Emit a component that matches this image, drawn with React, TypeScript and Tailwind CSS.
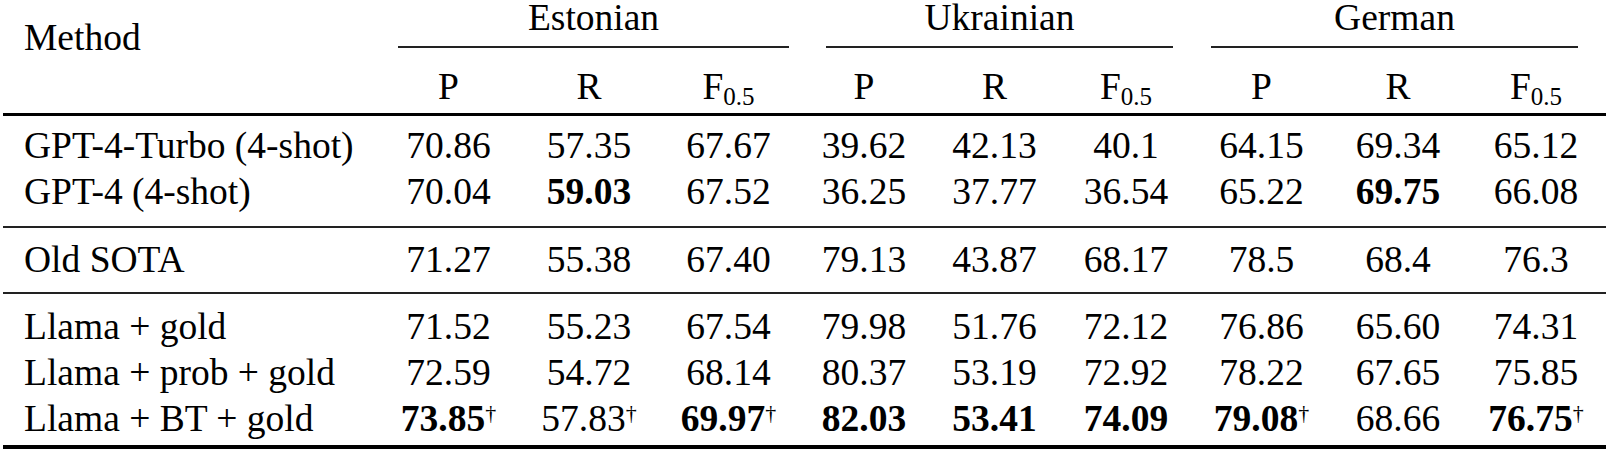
import React from "react";

// "*" prefix = bold, "^" suffix = dagger
const groupA = [
  ["GPT-4-Turbo (4-shot)", "70.86", "57.35", "67.67", "39.62", "42.13", "40.1", "64.15", "69.34", "65.12"],
  ["GPT-4 (4-shot)", "70.04", "*59.03", "67.52", "36.25", "37.77", "36.54", "65.22", "*69.75", "66.08"],
];
const groupB = [["Old SOTA", "71.27", "55.38", "67.40", "79.13", "43.87", "68.17", "78.5", "68.4", "76.3"]];
const groupC = [
  ["Llama + gold", "71.52", "55.23", "67.54", "79.98", "51.76", "72.12", "76.86", "65.60", "74.31"],
  ["Llama + prob + gold", "72.59", "54.72", "68.14", "80.37", "53.19", "72.92", "78.22", "67.65", "75.85"],
  ["Llama + BT + gold", "*73.85^", "57.83^", "*69.97^", "*82.03", "*53.41", "*74.09", "*79.08^", "68.66", "*76.75^"],
];

const Cell: React.FC<{ raw: string }> = ({ raw }) => {
  const bold = raw.startsWith("*");
  const dagger = raw.endsWith("^");
  const value = raw.replace("*", "").replace("^", "");
  return (
    <div className="h-[46px] leading-[46px] text-center whitespace-nowrap">
      <span className={bold ? "font-bold" : ""}>{value}</span>
      {dagger && <sup className="text-[22px] font-normal">†</sup>}
    </div>
  );
};

const Rows: React.FC<{ rows: string[][] }> = ({ rows }) => (
  <>
    {rows.map((row) => (
      <React.Fragment key={row[0]}>
        <div className="h-[46px] leading-[46px] pl-[21px] whitespace-nowrap">{row[0]}</div>
        {row.slice(1).map((v, i) => (
          <Cell key={i} raw={v} />
        ))}
      </React.Fragment>
    ))}
  </>
);

const Sub: React.FC<{ label: string }> = ({ label }) => (
  <div className="h-[65px] pt-[17px] leading-[44px] text-center">
    {label === "F" ? (
      <>
        F<sub className="text-[25px]">0.5</sub>
      </>
    ) : (
      label
    )}
  </div>
);

const Spacer: React.FC<{ h: string }> = ({ h }) => <div className={`col-span-10 ${h}`} />;

export default function App() {
  return (
    <div className="bg-white w-[1609px] h-[460px] text-black text-[37.5px] [font-family:Liberation_Serif,Times_New_Roman,serif]">
      <div className="ml-[3px] w-[1603px] grid grid-cols-[375px_141px_140px_139px_132px_129px_134px_137px_136px_140px]">
        {/* header */}
        <div className="row-span-2 pl-[21px] pt-[16px] leading-[44px]">Method</div>
        <div className="col-span-3 ml-[20px] mr-[9px] flex flex-col">
          <div className="h-[46px] leading-[35px] text-center">Estonian</div>
          <div className="h-[2px] bg-[#222]" />
        </div>
        <div className="col-span-3 ml-[28px] mr-[20px] flex flex-col">
          <div className="h-[46px] leading-[35px] text-center">Ukrainian</div>
          <div className="h-[2px] bg-[#222]" />
        </div>
        <div className="col-span-3 ml-[18px] mr-[28px] flex flex-col">
          <div className="h-[46px] leading-[35px] text-center">German</div>
          <div className="h-[2px] bg-[#222]" />
        </div>
        {["P", "R", "F", "P", "R", "F", "P", "R", "F"].map((l, i) => (
          <Sub key={i} label={l} />
        ))}
        <div className="col-span-10 h-[3px] bg-black" />

        <Spacer h="h-[7px]" />
        <Rows rows={groupA} />
        <Spacer h="h-[11px]" />
        <div className="col-span-10 h-[2px] bg-[#222]" />

        <Spacer h="h-[9px]" />
        <Rows rows={groupB} />
        <Spacer h="h-[9px]" />
        <div className="col-span-10 h-[2px] bg-[#222]" />

        <Spacer h="h-[10px]" />
        <Rows rows={groupC} />
        <Spacer h="h-[3px]" />
        <div className="col-span-10 h-[4px] bg-black" />
      </div>
    </div>
  );
}
